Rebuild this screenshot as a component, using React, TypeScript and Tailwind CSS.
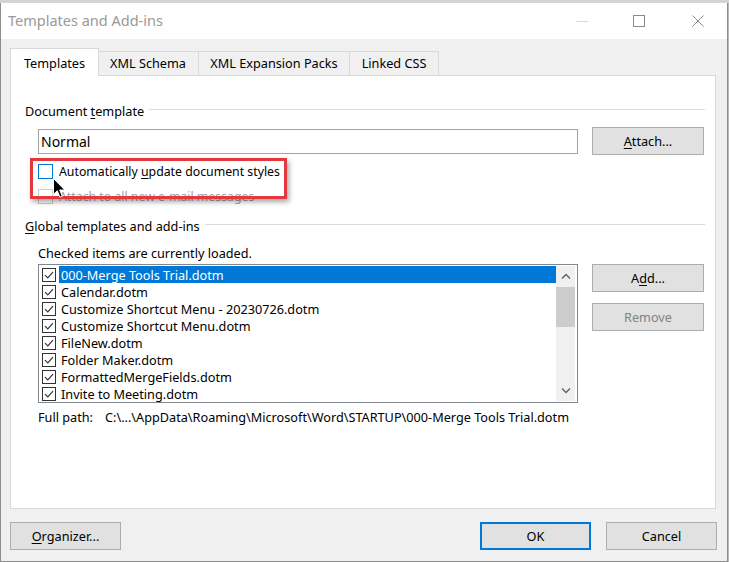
import React from 'react';

const ui = "font-['Segoe_UI','Noto_Sans',sans-serif]";

const items = [
  '000-Merge Tools Trial.dotm',
  'Calendar.dotm',
  'Customize Shortcut Menu - 20230726.dotm',
  'Customize Shortcut Menu.dotm',
  'FileNew.dotm',
  'Folder Maker.dotm',
  'FormattedMergeFields.dotm',
  'Invite to Meeting.dotm',
];

function CheckBox() {
  return (
    <span className="w-[14px] h-[14px] shrink-0 border border-[#333333] bg-white flex items-center justify-center">
      <svg width="10" height="8" viewBox="0 0 10 8">
        <path d="M1 4.2 L3.8 7 L9 1.2" fill="none" stroke="#333333" strokeWidth="1.2" />
      </svg>
    </span>
  );
}

function Button({ children, className = '' }: { children: React.ReactNode; className?: string }) {
  return (
    <div
      className={`h-[28px] shrink-0 flex items-center justify-center pt-[2px] bg-[#e1e1e1] border border-[#adadad] text-[12.7px] text-black ${className}`}
    >
      {children}
    </div>
  );
}

function GroupLabel({ children }: { children: React.ReactNode }) {
  return (
    <div className="h-[20px] flex items-center">
      <span className="text-[12.7px] text-black whitespace-nowrap pt-[1px]">{children}</span>
      <div className="flex-1 h-px bg-[#dcdcdc] ml-[5px] -mt-[3px]" />
    </div>
  );
}

function Cursor() {
  return (
    <svg width="13" height="21" viewBox="0 0 13 21" className="absolute left-[15px] top-[15px] z-20">
      <path
        d="M0.5 0.5 L0.5 16.5 L4.3 12.8 L7 19.2 L9.3 18.2 L6.7 12 L11.8 12 Z"
        fill="#000000"
        stroke="#ffffff"
        strokeWidth="1"
      />
    </svg>
  );
}

export default function App() {
  return (
    <div className={`w-[729px] h-[562px] bg-[#b8b8b8] flex flex-col overflow-hidden ${ui}`}>
      <div className="h-[3px] bg-[#d4d4d4] shrink-0" />
      <div className="flex-1 flex flex-col mr-[1px] border-l border-r border-b border-[#8e8e8e] bg-[#f0f0f0]">
        {/* title bar */}
        <div className="h-[36px] shrink-0 bg-white flex items-center pl-[7px]">
          <span className="text-[14.5px] text-[#999999] -mt-[1px]">Templates and Add-ins</span>
          <div className="ml-auto flex items-center">
            <svg width="14" height="14" viewBox="0 0 14 14" className="mr-[44px]">
              <path d="M1 7.5 H13" stroke="#d8d8d8" strokeWidth="1" />
            </svg>
            <svg width="12" height="12" viewBox="0 0 12 12" className="mr-[47px]">
              <rect x="0.5" y="0.5" width="11" height="11" fill="none" stroke="#8a8a8a" strokeWidth="1" />
            </svg>
            <svg width="12" height="12" viewBox="0 0 12 12" className="mr-[23px]">
              <path d="M0.5 0.5 L11.5 11.5 M11.5 0.5 L0.5 11.5" stroke="#8a8a8a" strokeWidth="1" />
            </svg>
          </div>
        </div>

        {/* body */}
        <div className="flex-1 flex flex-col pl-[9px] pt-[9px]">
          <div className="h-[27px] flex items-end text-[12.7px] text-black">
            <div className="relative z-10 w-[89px] h-[28px] -mb-[1px] bg-white border-l border-t border-r border-[#d9d9d9] flex items-center justify-center pt-[2px]">
              Templates
            </div>
            <div className="w-[101px] h-[24px] -ml-[1px] border-t border-r border-[#d9d9d9] flex items-center justify-center pt-[1px]">
              XML Schema
            </div>
            <div className="w-[151px] h-[24px] border-t border-r border-[#d9d9d9] flex items-center justify-center pt-[1px]">
              XML Expansion Packs
            </div>
            <div className="w-[89px] h-[24px] border-t border-r border-[#d9d9d9] flex items-center justify-center pt-[1px]">
              Linked CSS
            </div>
          </div>

          <div className="w-[706px] h-[434px] shrink-0 bg-white border border-[#d9d9d9] flex flex-col pt-[25px] pl-[14px] pr-[10px]">
            <GroupLabel>
              Document <span className="underline underline-offset-2">t</span>emplate
            </GroupLabel>

            <div className="mt-[6px] h-[28px] flex items-center">
              <div className="ml-[13px] w-[540px] h-[25px] border border-[#a3a3a3] flex items-center pl-[2px] pt-[1px] text-[14px] text-black">
                Normal
              </div>
              <Button className="ml-[14px] w-[112px]">
                <span>
                  <span className="underline underline-offset-2">A</span>ttach...
                </span>
              </Button>
            </div>

            <div className="relative mt-[8px] ml-[13px]">
              <div className="h-[17px] flex items-center text-[12.3px] text-black">
                <span className="w-[15px] h-[15px] border border-[#0078d7] bg-white shrink-0" />
                <span className="ml-[6px] pt-[1px]">
                  Automatically <span className="underline underline-offset-2">u</span>pdate document styles
                </span>
              </div>
              <div className="mt-[8px] h-[17px] flex items-center text-[12.3px] text-[#a0a0a0]">
                <span className="w-[15px] h-[15px] border border-[#cccccc] bg-white shrink-0" />
                <span className="ml-[6px] pt-[1px]">Attach to all new e-mail messages</span>
              </div>
              <div className="absolute -left-[8px] -top-[5px] w-[257px] h-[41px] border-[3px] border-[#e4383f] shadow-[2px_3px_5px_rgba(0,0,0,0.35)] z-10" />
              <Cursor />
            </div>

            <div className="mt-[11px]">
              <GroupLabel>
                <span className="underline underline-offset-2">G</span>lobal templates and add-ins
              </GroupLabel>
            </div>

            <div className="mt-[8px] ml-[13px] h-[18px] flex items-center pt-[1px] text-[12.7px] text-black">
              Checked items are currently loaded.
            </div>

            <div className="mt-[2px] flex items-start">
              <div className="ml-[13px] w-[540px] h-[139px] border border-[#828790] bg-white flex p-[1px]">
                <div className="flex-1 flex flex-col text-[12.7px]">
                  {items.map((name, i) => (
                    <div key={name} className="h-[17px] flex items-center pl-[2px]">
                      <CheckBox />
                      <span
                        className={`ml-[3px] h-[17px] flex items-center pl-[2px] pt-[2px] ${
                          i === 0 ? 'flex-1 bg-[#0078d7] text-white' : 'text-black'
                        }`}
                      >
                        {name}
                      </span>
                    </div>
                  ))}
                </div>
                <div className="w-[19px] mr-[1px] bg-[#f0f0f0] flex flex-col items-center">
                  <div className="h-[20px] flex items-center justify-center">
                    <svg width="10" height="6" viewBox="0 0 10 6">
                      <path d="M1 5.5 L5 1.5 L9 5.5" fill="none" stroke="#606060" strokeWidth="1.4" />
                    </svg>
                  </div>
                  <div className="w-[19px] h-[40px] mt-[1px] bg-[#cdcdcd]" />
                  <div className="flex-1" />
                  <div className="h-[20px] flex items-center justify-center">
                    <svg width="10" height="6" viewBox="0 0 10 6">
                      <path d="M1 0.5 L5 4.5 L9 0.5" fill="none" stroke="#606060" strokeWidth="1.4" />
                    </svg>
                  </div>
                </div>
              </div>
              <div className="ml-[14px] flex flex-col">
                <Button className="w-[112px]">
                  <span>
                    A<span className="underline underline-offset-2">d</span>d...
                  </span>
                </Button>
                <Button className="w-[112px] mt-[11px] !text-[#838383]">Remove</Button>
              </div>
            </div>

            <div className="mt-[6px] ml-[13px] h-[16px] flex items-center pt-[1px] text-[12.7px] text-black">
              <span className="w-[67px]">Full path:</span>
              <span>C:\...\AppData\Roaming\Microsoft\Word\STARTUP\000-Merge Tools Trial.dotm</span>
            </div>
          </div>

          <div className="mt-[13px] flex items-center pr-[10px]">
            <Button className="w-[111px]">
              <span>
                <span className="underline underline-offset-2">O</span>rganizer...
              </span>
            </Button>
            <Button className="ml-auto w-[111px] !border-2 !border-[#0078d7]">OK</Button>
            <Button className="ml-[15px] w-[111px]">Cancel</Button>
          </div>
        </div>
      </div>
    </div>
  );
}
